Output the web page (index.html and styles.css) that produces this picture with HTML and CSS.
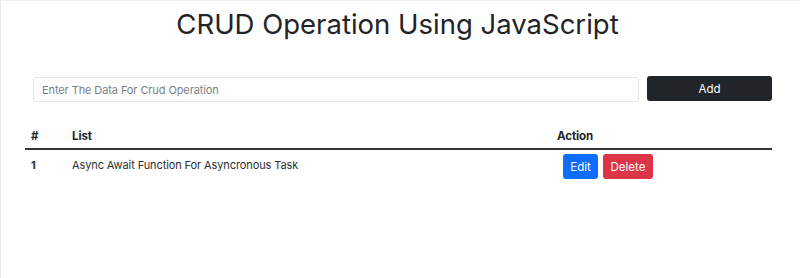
FILE: index.html
```html
<!DOCTYPE html>
<html lang="en">
<head>
<meta charset="utf-8">
<title>CRUD Operation Using JavaScript</title>
<link rel="stylesheet" href="styles.css">
</head>
<body>
<div class="page">
  <h1 class="title">CRUD Operation Using JavaScript</h1>
  <div class="form-row">
    <input class="data-input" type="text" placeholder="Enter The Data For Crud Operation">
    <button class="btn btn-dark">Add</button>
  </div>
  <table class="list-table">
    <thead>
      <tr>
        <th class="col-num">#</th>
        <th class="col-list">List</th>
        <th class="col-action">Action</th>
      </tr>
    </thead>
    <tbody>
      <tr>
        <td class="cell-num">1</td>
        <td>Async Await Function For Asyncronous Task</td>
        <td class="cell-action"><div class="actions"><button class="btn btn-small btn-blue">Edit</button><button class="btn btn-small btn-red">Delete</button></div></td>
      </tr>
    </tbody>
  </table>
</div>
</body>
</html>
```
FILE: styles.css
```css
* { box-sizing: border-box; }
html, body { margin: 0; padding: 0; background: #fff; }
body { font-family: Inter, "Noto Sans", sans-serif; color: #212529; }
.page {
  width: 800px;
  height: 278px;
  border-left: 1px solid #e9e9e9;
  border-top: 1px solid #efefef;
  overflow: hidden;
}
.title {
  margin: 6px 6px 0 0;
  text-align: center;
  font-size: 27.5px;
  font-weight: 400;
  line-height: 34px;
  color: #222428;
}
.form-row {
  display: flex;
  gap: 8px;
  margin: 35px 28px 0 32px;
  align-items: flex-start;
}
.data-input {
  width: 606px;
  height: 25px;
  margin-top: 1px;
  border: 1px solid #e5e7ea;
  border-radius: 3px;
  padding: 0 8px;
  font-family: inherit;
  font-size: 11px;
  letter-spacing: -0.1px;
  color: #212529;
  outline: none;
}
.data-input::placeholder { color: #7a7f85; }
.btn {
  border: none;
  font-family: inherit;
  cursor: pointer;
  color: #fff;
}
.btn-dark {
  width: 125px;
  height: 25px;
  background: #212529;
  border-radius: 3px;
  font-size: 11.5px;
}
.list-table {
  margin: 23px 0 0 24px;
  width: 747px;
  border-collapse: collapse;
  font-size: 11px;
  letter-spacing: -0.1px;
}
.list-table th {
  text-align: left;
  font-weight: 700;
  padding: 4px 6px 5px 6px;
  border-bottom: 2px solid #33363a;
  height: 24px;
  font-size: 11.5px;
}
.col-num { width: 41px; }
.col-list { width: 485px; }
.list-table td {
  padding: 8px 6px 4px 6px;
  vertical-align: top;
  color: #2b2f33;
}
.cell-num { font-weight: 700; }
.list-table td.cell-action { padding: 4px 6px 4px 12px; }
.actions { display: flex; gap: 5px; }
.btn-small {
  height: 25px;
  padding: 0;
  border-radius: 3px;
  font-size: 11.5px;
}
.btn-blue { background: #0d6efd; width: 35px; }
.btn-red { background: #dc3545; width: 50px; }
```
